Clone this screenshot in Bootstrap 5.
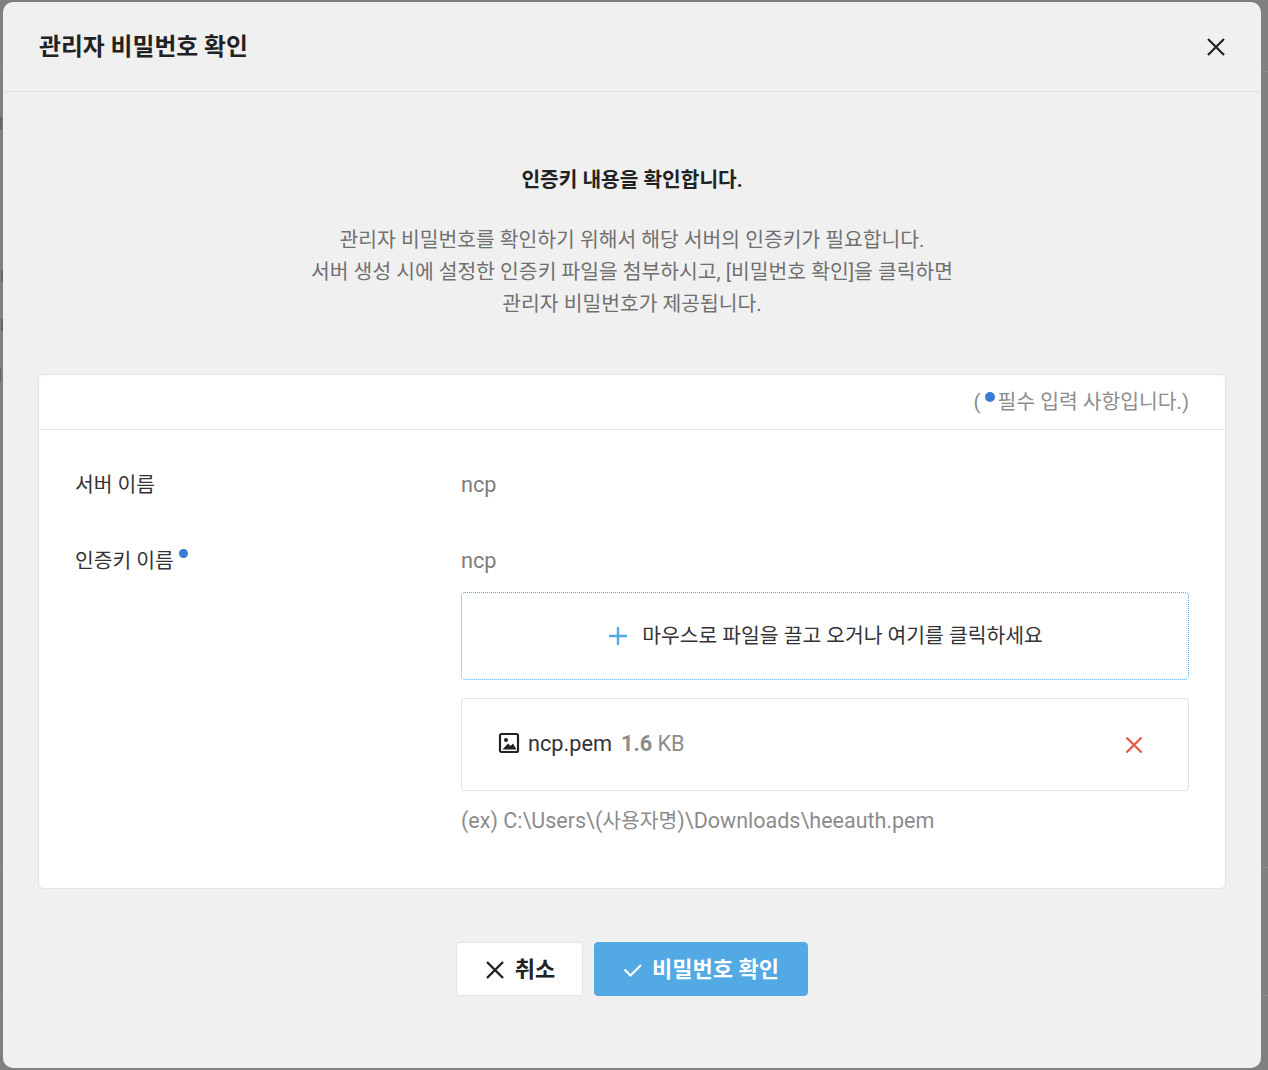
<!DOCTYPE html>
<html lang="ko">
<head>
<meta charset="utf-8">
<title>관리자 비밀번호 확인</title>
<link href="https://cdn.jsdelivr.net/npm/bootstrap@5.3.0/dist/css/bootstrap.min.css" rel="stylesheet">
<style>
html,body{height:100%;overflow:hidden}
body{font-family:Roboto,"Noto Sans CJK KR",sans-serif;font-size:20.4px;color:#222;
  background-color:#808080;
  background-image:linear-gradient(#8c8c8c,#8c8c8c),linear-gradient(#8c8c8c,#8c8c8c),linear-gradient(#8c8c8c,#8c8c8c),linear-gradient(#666,#666),linear-gradient(#666,#666),linear-gradient(#666,#666),linear-gradient(#666,#666);
  background-size:100% 1px,100% 1px,100% 1px,2px 12px,2px 12px,2px 12px,1px 14px;background-repeat:no-repeat;
  background-position:0 71px,0 867px,0 995px,0 117px,1px 270px,1px 319px,0 368px;
  padding:2px 7px 2px 3px}
.lat{font-size:21.7px}
.hint-txt .lat{font-size:21.5px}
.dlg{height:1066px;background:#f0f0f0;border:0;border-radius:10px;overflow:hidden}
.dlg-head{height:90px;padding:2px 36px 0;border-bottom:1px solid #e2e2e2;border-radius:0}
.dlg-title{font-size:23.8px;font-weight:700;line-height:1;color:#222;margin:0}
.x-btn{padding:0;border:0;background:none;line-height:0;margin-top:-2px}
.dlg-body{padding:0 35px}
.lead-txt{font-size:20.3px;font-weight:700;line-height:32px;margin:72px 0 28px;color:#222}
.desc-txt{font-weight:400;line-height:32px;color:#707070;margin:0 0 54px}
.form-box{height:515px;border:1px solid #e4e4e4;border-radius:6px;background:#fff}
.req-note{height:55px;padding:0 36px;font-weight:400;color:#8c8c8c;border-bottom:1px solid #e4e4e4;line-height:55px;border-radius:0}
.req-dot{display:inline-block;width:10px;height:10px;border-radius:50%;background:#3a7bd5;vertical-align:7px}
.req-note .req-dot{margin:0 3px 0 -1px}
.form-inner{padding:0 36px 0}
.lbl-col{width:386px;flex:none;font-weight:400;color:#333;line-height:28px}
.lbl-col .req-dot{vertical-align:10px;margin-left:0;width:9px;height:9px}
.val-col{flex:1;min-width:0}
.val-txt{font-weight:400;color:#7d7d7d;line-height:28px}
.row-a{padding-top:41px}
.row-b{padding-top:48px}
.drop-zone{height:88px;margin-top:17px;border:1px dotted #52a9e4;border-radius:4px;font-weight:400;color:#333}
.drop-zone svg{margin-left:1px}
.drop-zone span{margin-left:14px}
.file-box{height:93px;margin-top:18px;border:1px solid #e2e2e2;border-radius:4px;padding:0 45px 0 36px}
.file-ico{margin-top:-3px}
.file-name{font-weight:400;color:#333;margin-left:8px}
.file-size{color:#8c8c8c;font-weight:400;margin-left:9px}
.file-size b{font-weight:700}
.hint-txt{font-weight:400;color:#8c8c8c;line-height:28px;margin-top:16px}
.act-row{margin-top:53px;gap:11px}
.act-btn{height:54px;border-radius:4px;font-size:22px;font-weight:700;line-height:1;padding:2px 0 0;display:flex;align-items:center;justify-content:center}
.act-cancel{width:127px;background:#fff;border:1px solid #e4e4e4;color:#222;padding-left:2px}
.act-cancel:hover{background:#fff;color:#222}
.act-ok{width:214px;background:#52a9e4;border:1px solid #52a9e4;color:#fff}
.act-ok:hover{background:#52a9e4;color:#fff}
.act-cancel svg{margin-right:11px}
.act-ok svg{margin-right:9px}
</style>
</head>
<body>
<div class="modal-content dlg">
  <div class="modal-header dlg-head d-flex align-items-center justify-content-between">
    <h1 class="dlg-title">관리자 비밀번호 확인</h1>
    <button type="button" class="x-btn" aria-label="닫기">
      <svg width="18" height="18" viewBox="0 0 18 18"><path d="M1 1 17 17M17 1 1 17" stroke="#222" stroke-width="2.2" fill="none"/></svg>
    </button>
  </div>
  <div class="modal-body dlg-body">
    <p class="lead-txt text-center">인증키 내용을 확인합니다.</p>
    <p class="desc-txt text-center">관리자 비밀번호를 확인하기 위해서 해당 서버의 인증키가 필요합니다.<br>서버 생성 시에 설정한 인증키 파일을 첨부하시고, [비밀번호 확인]을 클릭하면<br>관리자 비밀번호가 제공됩니다.</p>
    <div class="card form-box">
      <div class="req-note text-end">( <i class="req-dot"></i>필수 입력 사항입니다.)</div>
      <div class="form-inner">
        <div class="d-flex row-a">
          <div class="lbl-col">서버 이름</div>
          <div class="val-col val-txt lat">ncp</div>
        </div>
        <div class="d-flex row-b">
          <div class="lbl-col">인증키 이름 <i class="req-dot"></i></div>
          <div class="val-col">
            <div class="val-txt lat">ncp</div>
            <div class="drop-zone d-flex align-items-center justify-content-center">
              <svg width="20" height="20" viewBox="0 0 20 20"><path d="M10 1V19M1 10H19" stroke="#52a9e4" stroke-width="2.4" fill="none"/></svg>
              <span>마우스로 파일을 끌고 오거나 여기를 클릭하세요</span>
            </div>
            <div class="file-box d-flex align-items-center">
              <svg class="file-ico" width="22" height="22" viewBox="0 0 22 22"><rect x="2" y="2" width="18" height="18" rx="1.5" fill="none" stroke="#222" stroke-width="2.2"/><circle cx="8" cy="8" r="2" fill="#222"/><path d="M4.5 17.5 10 11.5 12.5 14 15 11.5 18.5 17.5Z" fill="#222"/></svg>
              <span class="file-name lat">ncp.pem</span>
              <span class="file-size lat"><b>1.6</b> KB</span>
              <svg class="ms-auto" width="18" height="18" viewBox="0 0 18 18"><path d="M1.5 1.5 16.5 16.5M16.5 1.5 1.5 16.5" stroke="#ea5a48" stroke-width="2.4" fill="none"/></svg>
            </div>
            <div class="hint-txt"><span class="lat">(ex) C:\Users\(</span>사용자명<span class="lat">)\Downloads\heeauth.pem</span></div>
          </div>
        </div>
      </div>
    </div>
    <div class="d-flex justify-content-center act-row">
      <button type="button" class="btn act-btn act-cancel">
        <svg width="18" height="18" viewBox="0 0 18 18"><path d="M1 1 17 17M17 1 1 17" stroke="#222" stroke-width="2.4" fill="none"/></svg>취소
      </button>
      <button type="button" class="btn act-btn act-ok">
        <svg width="20" height="16" viewBox="0 0 20 16"><path d="M1.5 7.5 7.5 13.5 18 3" stroke="#fff" stroke-width="2.2" fill="none"/></svg>비밀번호 확인
      </button>
    </div>
  </div>
</div>
<script src="https://cdn.jsdelivr.net/npm/bootstrap@5.3.0/dist/js/bootstrap.bundle.min.js"></script>
</body>
</html>
